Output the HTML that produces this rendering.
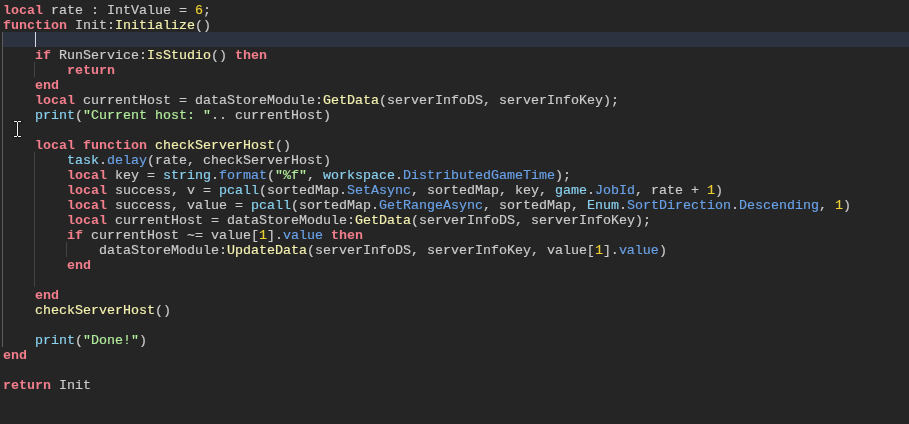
<!DOCTYPE html>
<html><head><meta charset="utf-8">
<style>
html,body{margin:0;padding:0;}
body{width:909px;height:424px;background:#252525;position:relative;overflow:hidden;}
.hl{position:absolute;left:3px;top:32px;width:906px;height:15px;background:#2d3241;}
.g{position:absolute;width:1px;background:#444444;}
.l{will-change:transform;-webkit-text-stroke:0.15px currentColor;position:absolute;left:3px;height:15px;line-height:15px;padding-top:1px;white-space:pre;font-family:"Liberation Mono",monospace;font-size:13.333px;color:#cccccc;}
.k{color:#f37e8c;font-weight:bold;-webkit-text-stroke:0;}
.n{color:#ecce30;}
.s{color:#b2ec9c;}
.b{color:#8ad2f0;}
.m{color:#f5f2b0;}
.p{color:#6aa2e8;}
.cur{position:absolute;left:35px;top:32px;width:1px;height:15px;background:#d8d8e8;}
.ib{position:absolute;background:#f0f0f0;}
</style></head><body>
<div class="hl"></div>
<div class="g" style="left:2px;top:32px;height:315px;background:#5c5c5c;"></div>
<div class="g" style="left:34px;top:62px;height:15px;"></div>
<div class="g" style="left:34px;top:152px;height:135px;"></div>
<div class="g" style="left:66px;top:242px;height:15px;"></div>
<div class="l" style="top:2px"><span class="k">local</span> rate : IntValue = <span class="n">6</span>;</div>
<div class="l" style="top:17px"><span class="k">function</span> Init:<span class="m">Initialize</span>()</div>
<div class="l" style="top:47px">    <span class="k">if</span> RunService:<span class="m">IsStudio</span>() <span class="k">then</span></div>
<div class="l" style="top:62px">        <span class="k">return</span></div>
<div class="l" style="top:77px">    <span class="k">end</span></div>
<div class="l" style="top:92px">    <span class="k">local</span> currentHost = dataStoreModule:<span class="m">GetData</span>(serverInfoDS, serverInfoKey);</div>
<div class="l" style="top:107px">    <span class="b">print</span>(<span class="s">"Current host: "</span>.. currentHost)</div>
<div class="l" style="top:137px">    <span class="k">local</span> <span class="k">function</span> <span class="m">checkServerHost</span>()</div>
<div class="l" style="top:152px">        <span class="b">task</span>.<span class="p">delay</span>(rate, checkServerHost)</div>
<div class="l" style="top:167px">        <span class="k">local</span> key = <span class="b">string</span>.<span class="p">format</span>(<span class="s">"%f"</span>, <span class="b">workspace</span>.<span class="p">DistributedGameTime</span>);</div>
<div class="l" style="top:182px">        <span class="k">local</span> success, v = <span class="b">pcall</span>(sortedMap.<span class="p">SetAsync</span>, sortedMap, key, <span class="b">game</span>.<span class="p">JobId</span>, rate + <span class="n">1</span>)</div>
<div class="l" style="top:197px">        <span class="k">local</span> success, value = <span class="b">pcall</span>(sortedMap.<span class="p">GetRangeAsync</span>, sortedMap, <span class="b">Enum</span>.<span class="p">SortDirection</span>.<span class="p">Descending</span>, <span class="n">1</span>)</div>
<div class="l" style="top:212px">        <span class="k">local</span> currentHost = dataStoreModule:<span class="m">GetData</span>(serverInfoDS, serverInfoKey);</div>
<div class="l" style="top:227px">        <span class="k">if</span> currentHost ~= value[<span class="n">1</span>].<span class="p">value</span> <span class="k">then</span></div>
<div class="l" style="top:242px">            dataStoreModule:<span class="m">UpdateData</span>(serverInfoDS, serverInfoKey, value[<span class="n">1</span>].<span class="p">value</span>)</div>
<div class="l" style="top:257px">        <span class="k">end</span></div>
<div class="l" style="top:287px">    <span class="k">end</span></div>
<div class="l" style="top:302px">    <span class="m">checkServerHost</span>()</div>
<div class="l" style="top:332px">    <span class="b">print</span>(<span class="s">"Done!"</span>)</div>
<div class="l" style="top:347px"><span class="k">end</span></div>
<div class="l" style="top:377px"><span class="k">return</span> Init</div>
<div class="cur"></div>
<svg style="position:absolute;left:12px;top:119px;" width="11" height="20" shape-rendering="crispEdges">
<g fill="#1a1a1a"><rect x="1" y="1" width="9" height="3"/><rect x="4" y="2" width="3" height="16"/><rect x="1" y="16" width="9" height="3"/></g>
<g fill="#f4f4f4"><rect x="2" y="2" width="3" height="1"/><rect x="6" y="2" width="3" height="1"/><rect x="5" y="3" width="1" height="14"/><rect x="2" y="17" width="3" height="1"/><rect x="6" y="17" width="3" height="1"/></g>
</svg>
</body></html>
